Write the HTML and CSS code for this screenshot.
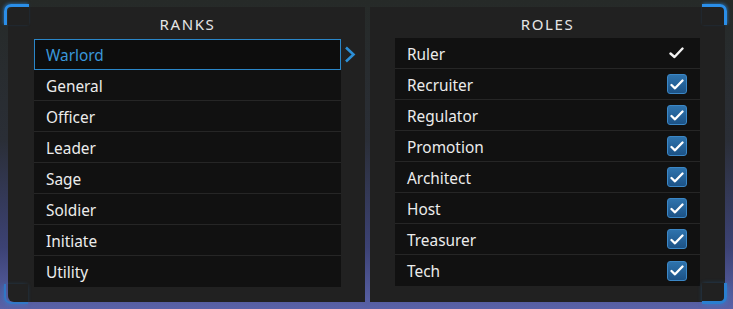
FILE: index.html
```html
<!DOCTYPE html>
<html>
<head>
<meta charset="utf-8">
<link rel="stylesheet" href="styles.css">
</head>
<body>
<div class="screen">
  <div class="panels">
    <section class="panel panel-left">
      <h2 class="title">RANKS</h2>
      <div class="list-wrap">
        <ul class="list">
          <li class="row selected">Warlord</li>
          <li class="row">General</li>
          <li class="row">Officer</li>
          <li class="row">Leader</li>
          <li class="row">Sage</li>
          <li class="row">Soldier</li>
          <li class="row">Initiate</li>
          <li class="row">Utility</li>
        </ul>
        <svg class="chevron" width="12" height="17" viewBox="0 0 12 17"><polyline points="2,1.5 9.5,8.5 2,15.5" fill="none" stroke="#2c8fd6" stroke-width="2.6"/></svg>
      </div>
    </section>
    <section class="panel panel-right">
      <h2 class="title">ROLES</h2>
      <ul class="list">
        <li class="row"><span>Ruler</span><svg class="tick" width="15" height="12" viewBox="0 0 15 12"><polyline points="1.5,6.5 5.5,10 13.5,1.5" fill="none" stroke="#f2f2f2" stroke-width="2.4" stroke-linecap="round" stroke-linejoin="round"/></svg></li>
        <li class="row"><span>Recruiter</span><span class="box"><svg width="14" height="11" viewBox="0 0 14 11"><polyline points="1.5,6 5,9.3 12.5,1.5" fill="none" stroke="#fff" stroke-width="2.3" stroke-linecap="round" stroke-linejoin="round"/></svg></span></li>
        <li class="row"><span>Regulator</span><span class="box"><svg width="14" height="11" viewBox="0 0 14 11"><polyline points="1.5,6 5,9.3 12.5,1.5" fill="none" stroke="#fff" stroke-width="2.3" stroke-linecap="round" stroke-linejoin="round"/></svg></span></li>
        <li class="row"><span>Promotion</span><span class="box"><svg width="14" height="11" viewBox="0 0 14 11"><polyline points="1.5,6 5,9.3 12.5,1.5" fill="none" stroke="#fff" stroke-width="2.3" stroke-linecap="round" stroke-linejoin="round"/></svg></span></li>
        <li class="row"><span>Architect</span><span class="box"><svg width="14" height="11" viewBox="0 0 14 11"><polyline points="1.5,6 5,9.3 12.5,1.5" fill="none" stroke="#fff" stroke-width="2.3" stroke-linecap="round" stroke-linejoin="round"/></svg></span></li>
        <li class="row"><span>Host</span><span class="box"><svg width="14" height="11" viewBox="0 0 14 11"><polyline points="1.5,6 5,9.3 12.5,1.5" fill="none" stroke="#fff" stroke-width="2.3" stroke-linecap="round" stroke-linejoin="round"/></svg></span></li>
        <li class="row"><span>Treasurer</span><span class="box"><svg width="14" height="11" viewBox="0 0 14 11"><polyline points="1.5,6 5,9.3 12.5,1.5" fill="none" stroke="#fff" stroke-width="2.3" stroke-linecap="round" stroke-linejoin="round"/></svg></span></li>
        <li class="row"><span>Tech</span><span class="box"><svg width="14" height="11" viewBox="0 0 14 11"><polyline points="1.5,6 5,9.3 12.5,1.5" fill="none" stroke="#fff" stroke-width="2.3" stroke-linecap="round" stroke-linejoin="round"/></svg></span></li>
      </ul>
    </section>
  </div>
  <span class="corner corner-tl"></span>
  <span class="corner corner-tr"></span>
  <span class="corner corner-bl"></span>
  <span class="corner corner-br"></span>
</div>
</body>
</html>
```
FILE: styles.css
```css
html, body {
  margin: 0;
  padding: 0;
}
body {
  width: 733px;
  height: 309px;
  overflow: hidden;
  font-family: "Noto Sans", "Open Sans", sans-serif;
}
.screen {
  position: relative;
  width: 733px;
  height: 309px;
  background: linear-gradient(to bottom, #262a28 0%, #2a2e36 45%, #3c4274 80%, #5a62a8 100%);
}
.panels {
  display: flex;
  gap: 5px;
  padding: 7px 0 0 8px;
}
.panel {
  height: 295px;
  background: #212121;
  box-sizing: border-box;
  display: flex;
  flex-direction: column;
}
.panel-left {
  width: 357px;
  padding-left: 26px;
  border-radius: 6px 0 0 6px;
}
.panel-right {
  width: 355px;
  padding-left: 25px;
  border-radius: 0 6px 6px 0;
}
.title {
  margin: 0;
  height: 31px;
  line-height: 34px;
  font-size: 15px;
  font-weight: 400;
  letter-spacing: 1.6px;
  color: #e6e6e6;
  text-align: center;
}
.panel-left .title { width: 307px; }
.panel-right .title { width: 305px; }
.list-wrap {
  display: flex;
  align-items: flex-start;
  margin-top: 1px;
}
.list {
  list-style: none;
  margin: 0;
  padding: 0;
  background: #111111;
}
.panel-left .list { width: 307px; }
.panel-right .list { width: 305px; }
.row {
  height: 31px;
  box-sizing: border-box;
  border-bottom: 1px solid #262626;
  padding: 2px 13px 0 12px;
  font-size: 15.4px;
  color: #ececec;
  display: flex;
  align-items: center;
  justify-content: space-between;
}
.row:last-child { border-bottom: none; }
.row.selected {
  border: 1px solid #2a86c8;
  padding-left: 11px;
  color: #3a97da;
  background: #0d0d0d;
}
.chevron {
  margin-left: 3px;
  margin-top: 7px;
}
.tick {
  margin-right: 3px;
  margin-top: -2px;
}
.box {
  width: 20px;
  height: 20px;
  margin-top: -2px;
  box-sizing: border-box;
  border: 1px solid #3b87c6;
  border-radius: 3px;
  background: linear-gradient(to bottom, #2e73ad 0%, #1c5286 100%);
  display: flex;
  align-items: center;
  justify-content: center;
}
.box svg { display: block; }
.corner {
  position: absolute;
  width: 22px;
  height: 18px;
  border: 0 solid #2a8ee8;
}
.corner-tl {
  left: 4px; top: 4px;
  border-top-width: 3px; border-left-width: 3px;
  border-top-left-radius: 7px;
  box-shadow: -1px -1px 3px rgba(40,140,230,0.5);
}
.corner-tr {
  right: 6px; top: 4px;
  border-top-width: 3px; border-right-width: 3px;
  border-top-right-radius: 7px;
  box-shadow: 1px -1px 3px rgba(40,140,230,0.5);
}
.corner-bl {
  left: 4px; bottom: 5px;
  border-bottom-width: 2px; border-left-width: 2px;
  border-bottom-left-radius: 7px;
  border-color: rgba(42,127,208,0.8);
  box-shadow: -1px 1px 4px rgba(40,140,230,0.35);
}
.corner-br {
  right: 6px; bottom: 5px;
  border-bottom-width: 3px; border-right-width: 3px;
  border-bottom-right-radius: 7px;
  border-color: #2a7fd0;
  box-shadow: 1px 1px 5px rgba(40,140,230,0.45);
}
```
